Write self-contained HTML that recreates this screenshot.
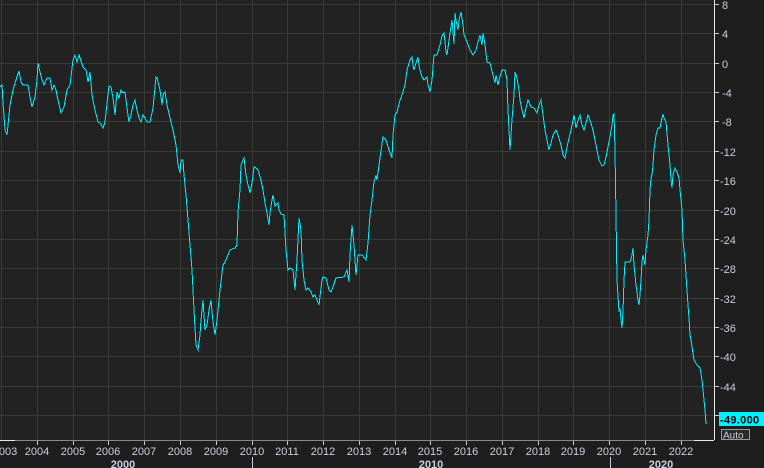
<!DOCTYPE html>
<html><head><meta charset="utf-8"><style>
html,body{margin:0;padding:0;background:#1f1f1f;width:764px;height:468px;overflow:hidden}
svg{display:block}
text{font-family:"Liberation Sans",sans-serif}
</style></head><body>
<svg width="764" height="468" viewBox="0 0 764 468" xmlns="http://www.w3.org/2000/svg">
<rect x="0" y="0" width="764" height="468" fill="#1e1e1e"/>
<rect x="0" y="0" width="714" height="440" fill="#222222"/>
<g stroke="#383a34" stroke-width="1">
<line x1="1.5" y1="0" x2="1.5" y2="440"/><line x1="37.5" y1="0" x2="37.5" y2="440"/><line x1="73.5" y1="0" x2="73.5" y2="440"/><line x1="108.5" y1="0" x2="108.5" y2="440"/><line x1="144.5" y1="0" x2="144.5" y2="440"/><line x1="180.5" y1="0" x2="180.5" y2="440"/><line x1="216.5" y1="0" x2="216.5" y2="440"/><line x1="252.5" y1="0" x2="252.5" y2="440"/><line x1="287.5" y1="0" x2="287.5" y2="440"/><line x1="323.5" y1="0" x2="323.5" y2="440"/><line x1="359.5" y1="0" x2="359.5" y2="440"/><line x1="395.5" y1="0" x2="395.5" y2="440"/><line x1="430.5" y1="0" x2="430.5" y2="440"/><line x1="466.5" y1="0" x2="466.5" y2="440"/><line x1="502.5" y1="0" x2="502.5" y2="440"/><line x1="538.5" y1="0" x2="538.5" y2="440"/><line x1="573.5" y1="0" x2="573.5" y2="440"/><line x1="609.5" y1="0" x2="609.5" y2="440"/><line x1="645.5" y1="0" x2="645.5" y2="440"/><line x1="681.5" y1="0" x2="681.5" y2="440"/>
<line x1="0" y1="4.5" x2="714" y2="4.5"/><line x1="0" y1="33.5" x2="714" y2="33.5"/><line x1="0" y1="63.5" x2="714" y2="63.5"/><line x1="0" y1="92.5" x2="714" y2="92.5"/><line x1="0" y1="121.5" x2="714" y2="121.5"/><line x1="0" y1="151.5" x2="714" y2="151.5"/><line x1="0" y1="180.5" x2="714" y2="180.5"/><line x1="0" y1="210.5" x2="714" y2="210.5"/><line x1="0" y1="239.5" x2="714" y2="239.5"/><line x1="0" y1="268.5" x2="714" y2="268.5"/><line x1="0" y1="298.5" x2="714" y2="298.5"/><line x1="0" y1="327.5" x2="714" y2="327.5"/><line x1="0" y1="356.5" x2="714" y2="356.5"/><line x1="0" y1="386.5" x2="714" y2="386.5"/><line x1="0" y1="415.5" x2="714" y2="415.5"/>
</g>
<polyline fill="none" stroke="#00f0ff" stroke-width="1" shape-rendering="crispEdges" points="0,87 2,85 3,103 5,130 7,135 8,125 10,105 13,90 16,80 19,71 21,82 23,85 28,85 30,97 32,107 35,97 37,80 38,63 40,72 42,80 44,85 47,78 50,78 52,90 54,85 56,90 58,100 61,113 64,107 67,90 70,85 73,60 75,55 77,62 79,55 83,67 86,70 88,82 90,72 92,95 95,110 98,122 100,123 103,128 105,122 107,103 109,86 111,87 113,98 115,115 117,92 119,98 121,90 123,93 125,92 127,108 129,122 131,115 133,105 135,100 137,110 139,118 141,122 143,115 145,118 147,122 150,122 153,108 156,77 157,78 160,90 162,105 163,95 165,92 167,105 170,118 173,130 176,145 178,165 180,173 181,160 183,160 184,175 186,195 188,220 190,245 192,270 194,310 196,345 198,350 200,335 201,320 203,300 205,330 207,325 209,310 211,300 213,322 215,335 217,320 220,290 223,265 225,262 228,255 230,250 235,248 237,245 238,212 240,190 241,165 243,160 244,158 246,175 248,185 250,193 252,183 254,167 255,167 258,170 261,180 263,190 265,203 267,213 269,225 270,213 272,200 273,195 275,206 278,203 279,210 281,214 284,215 286,250 288,270 290,268 293,270 295,290 297,260 299,218 301,230 302,260 304,280 306,290 308,288 311,292 313,297 315,295 317,300 319,305 322,280 323,277 326,278 329,290 331,292 333,287 336,278 344,277 347,270 349,282 350,255 352,225 354,245 356,275 358,255 362,255 366,260 368,243 370,215 372,200 374,182 376,175 377,180 380,158 383,137 386,140 389,150 392,158 393,135 395,115 397,112 400,100 402,95 405,85 407,70 410,60 412,57 413,65 414,70 416,63 418,57 419,65 420,70 422,77 424,80 427,77 428,85 430,92 432,80 434,55 437,55 440,45 442,36 444,33 446,52 447,55 450,33 452,20 454,44 455,13 456,20 458,30 459,20 461,12 463,25 464,35 467,42 470,50 473,55 476,50 478,42 480,35 482,45 483,33 485,45 487,62 490,63 493,75 495,83 496,75 498,85 499,80 502,70 505,70 507,80 508,110 510,150 512,120 514,95 515,72 517,78 519,90 520,100 522,110 524,118 526,108 528,100 531,107 534,108 537,113 539,105 541,100 543,115 545,130 547,140 549,150 551,143 553,135 556,130 558,135 561,145 563,155 565,158 567,147 569,138 571,130 572,125 574,115 576,128 578,120 580,115 582,125 584,130 586,123 588,115 590,120 593,130 595,140 597,150 599,160 602,166 604,165 606,157 608,147 610,137 612,125 613,115 614,114 615,150 616,215 617,280 619,312 620,308 621,320 622,328 623,312 624,280 625,262 630,262 632,255 633,248 634,265 636,285 638,300 639,305 640,295 641,280 642,262 643,255 645,265 646,250 648,235 649,220 650,190 651,178 652,175 653,165 654,150 656,135 658,128 660,128 662,118 663,114 664,118 666,122 668,145 670,165 671,180 672,188 673,175 675,168 677,172 679,178 680,190 681,200 682,210 683,240 685,260 686,275 688,305 689,318 690,335 691,340 694,360 697,365 700,368 702,380 703,390 705,410 706,424"/>
<line x1="714.5" y1="0" x2="714.5" y2="440" stroke="#e8e8e8" stroke-width="1"/>
<line x1="0" y1="440.5" x2="714" y2="440.5" stroke="#8a8a8a" stroke-width="1"/>
<line x1="0" y1="440.5" x2="15" y2="440.5" stroke="#e8e8e8"/><line x1="694" y1="440.5" x2="714" y2="440.5" stroke="#e8e8e8"/>
<g stroke="#c8ccd4" stroke-width="1">
<line x1="715" y1="4.5" x2="719" y2="4.5"/><line x1="715" y1="33.5" x2="719" y2="33.5"/><line x1="715" y1="63.5" x2="719" y2="63.5"/><line x1="715" y1="92.5" x2="719" y2="92.5"/><line x1="715" y1="121.5" x2="719" y2="121.5"/><line x1="715" y1="151.5" x2="719" y2="151.5"/><line x1="715" y1="180.5" x2="719" y2="180.5"/><line x1="715" y1="210.5" x2="719" y2="210.5"/><line x1="715" y1="239.5" x2="719" y2="239.5"/><line x1="715" y1="268.5" x2="719" y2="268.5"/><line x1="715" y1="298.5" x2="719" y2="298.5"/><line x1="715" y1="327.5" x2="719" y2="327.5"/><line x1="715" y1="356.5" x2="719" y2="356.5"/><line x1="715" y1="386.5" x2="719" y2="386.5"/><line x1="715" y1="415.5" x2="719" y2="415.5"/>
</g>
<g fill="#c8d0dc" font-size="11">
<text x="722" y="9">8</text><text x="722" y="38">4</text><text x="722" y="68">0</text><text x="722" y="97">-4</text><text x="722" y="126">-8</text><text x="720" y="156">-12</text><text x="720" y="185">-16</text><text x="720" y="215">-20</text><text x="720" y="244">-24</text><text x="720" y="273">-28</text><text x="720" y="303">-32</text><text x="720" y="332">-36</text><text x="720" y="361">-40</text><text x="720" y="391">-44</text><text x="720" y="420">-48</text>
</g>
<rect x="719" y="412" width="45" height="14" fill="#00f0ff"/>
<text x="720" y="423.5" font-size="11" font-weight="bold" fill="#000" letter-spacing="0.3">-49.000</text>
<rect x="721.5" y="429.5" width="28" height="10" fill="#2a2a2a" stroke="#9a9a9a"/>
<text x="723" y="438.5" font-size="10" fill="#c8d0dc">Auto</text>
<g stroke="#c8ccd4"><line x1="37.5" y1="441" x2="37.5" y2="445"/><line x1="73.5" y1="441" x2="73.5" y2="445"/><line x1="108.5" y1="441" x2="108.5" y2="445"/><line x1="144.5" y1="441" x2="144.5" y2="445"/><line x1="180.5" y1="441" x2="180.5" y2="445"/><line x1="216.5" y1="441" x2="216.5" y2="445"/><line x1="252.5" y1="441" x2="252.5" y2="445"/><line x1="287.5" y1="441" x2="287.5" y2="445"/><line x1="323.5" y1="441" x2="323.5" y2="445"/><line x1="359.5" y1="441" x2="359.5" y2="445"/><line x1="395.5" y1="441" x2="395.5" y2="445"/><line x1="430.5" y1="441" x2="430.5" y2="445"/><line x1="466.5" y1="441" x2="466.5" y2="445"/><line x1="502.5" y1="441" x2="502.5" y2="445"/><line x1="538.5" y1="441" x2="538.5" y2="445"/><line x1="573.5" y1="441" x2="573.5" y2="445"/><line x1="609.5" y1="441" x2="609.5" y2="445"/><line x1="645.5" y1="441" x2="645.5" y2="445"/><line x1="681.5" y1="441" x2="681.5" y2="445"/>
<line x1="252.5" y1="457" x2="252.5" y2="468"/><line x1="610.5" y1="457" x2="610.5" y2="468"/></g>
<g fill="#c8d0dc" font-size="11" text-anchor="middle">
<text x="5" y="455">2003</text><text x="37" y="455">2004</text><text x="73" y="455">2005</text><text x="108" y="455">2006</text><text x="144" y="455">2007</text><text x="180" y="455">2008</text><text x="216" y="455">2009</text><text x="252" y="455">2010</text><text x="287" y="455">2011</text><text x="323" y="455">2012</text><text x="359" y="455">2013</text><text x="395" y="455">2014</text><text x="430" y="455">2015</text><text x="466" y="455">2016</text><text x="502" y="455">2017</text><text x="538" y="455">2018</text><text x="573" y="455">2019</text><text x="609" y="455">2020</text><text x="645" y="455">2021</text><text x="681" y="455">2022</text>
</g>
<g fill="#c8d0dc" font-size="11" font-weight="bold" text-anchor="middle">
<text x="123" y="468">2000</text><text x="431" y="468">2010</text><text x="661" y="468">2020</text>
</g>
</svg>
</body></html>
